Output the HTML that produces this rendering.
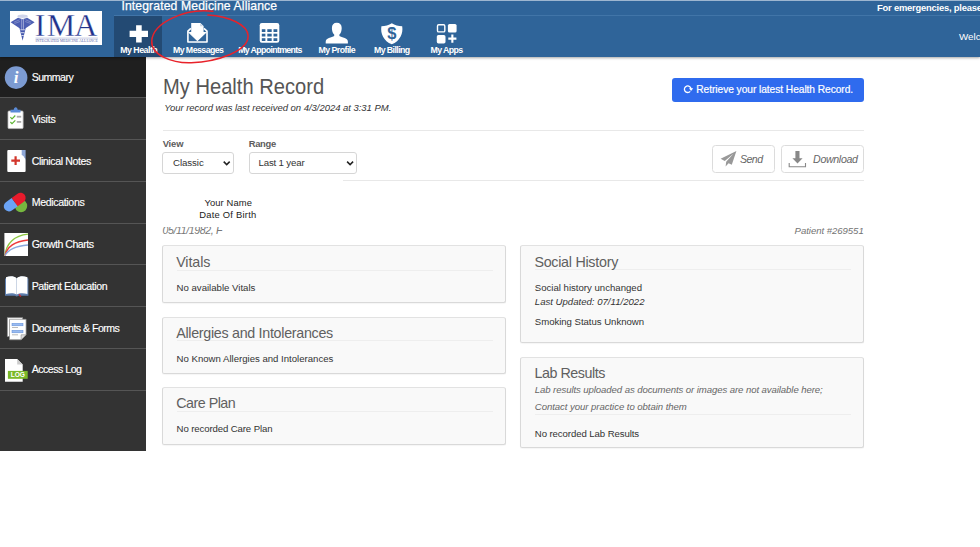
<!DOCTYPE html>
<html><head><meta charset="utf-8">
<style>
*{box-sizing:border-box;margin:0;padding:0}
html,body{width:980px;height:547px;overflow:hidden;background:#fff;font-family:"Liberation Sans",sans-serif;}
.abs{position:absolute}
.t{position:absolute;white-space:nowrap;z-index:1}
.i{font-style:italic}.b{font-weight:bold}
#hdr{position:absolute;left:0;top:0;width:980px;height:56.5px;background:#2f6499;box-shadow:0 1px 2.5px rgba(0,0,0,.35)}
#hdr .topline{position:absolute;left:0;top:0;width:980px;height:1px;background:#9db6d0}
#hdr .sep{position:absolute;left:114px;top:15.2px;width:866px;height:1px;background:#4175a8}
#logo{position:absolute;left:9.8px;top:10.8px;width:92.1px;height:34px;background:#fff;overflow:hidden}
#logo .ima{position:absolute;left:25px;top:-3.4px;font-family:"Liberation Serif",serif;font-size:32px;line-height:36px;color:#22328c;white-space:nowrap;letter-spacing:1.2px;-webkit-text-stroke:0.3px #fff}
.tab{position:absolute;top:16px;height:40.5px;}
.tab.active{background:#234a73}
#side{position:absolute;left:0;top:56.5px;width:146px;height:394.5px;background:#333}
.si{position:absolute;left:0;width:146px;height:41.75px;border-bottom:1px solid #555;}
.si.act{background:#1f1f1f}
.hr{position:absolute;height:1px;background:#e8e8e8}
.sel{position:absolute;border:1px solid #d6d6d6;border-radius:3px;background:#fff}
.card{position:absolute;background:#f9f9f9;border:1px solid #d9d9d9;border-top-color:#e2e2e2;border-radius:2.5px;box-shadow:0 1px 1px rgba(0,0,0,.04)}
.btn{position:absolute;border:1px solid #dcdcdc;border-radius:3.5px;background:#fff}
</style></head><body>
<div id="main" class="abs" style="left:0;top:0;width:980px;height:547px">
<div class="t" id="h1" style="left:163.1px;top:73.5px;font-size:22px;line-height:26px;color:#555;transform-origin:0 0;transform:scaleX(0.915)">My Health Record</div>
<div class="t i" id="sub" style="left:164.2px;top:101.51px;font-size:9.5px;line-height:12px;color:#333;letter-spacing:-0.03px;">Your record was last received on 4/3/2024 at 3:31 PM.</div>
<div class="abs" style="left:672.3px;top:77.5px;width:191.5px;height:24.4px;background:#2f6bee;border-radius:3px"></div>
<div class="t " id="retr" style="left:696.3px;top:83.97px;font-size:10.2px;line-height:12px;color:#fff;letter-spacing:-0.05px;-webkit-text-stroke:0.2px #fff;">Retrieve your latest Health Record.</div>
<div class="hr" style="left:163px;top:130.1px;width:701px;background:#e8e8e8"></div>
<div class="t b" id="view" style="left:162.7px;top:137.84px;font-size:9.4px;line-height:12px;color:#5c5c5c;letter-spacing:-0.15px;">View</div>
<div class="t b" id="range" style="left:248.8px;top:137.84px;font-size:9.4px;line-height:12px;color:#5c5c5c;letter-spacing:-0.33px;">Range</div>
<div class="sel" style="left:162.2px;top:152px;width:71.5px;height:21.7px"></div>
<div class="sel" style="left:248.6px;top:152px;width:108.3px;height:21.7px"></div>
<div class="t " id="classic" style="left:173.0px;top:156.84px;font-size:9.7px;line-height:12px;color:#333;letter-spacing:-0.08px;">Classic</div>
<div class="t " id="last" style="left:258.5px;top:156.84px;font-size:9.7px;line-height:12px;color:#333;letter-spacing:-0.18px;">Last 1 year</div>
<div class="btn" style="left:712.3px;top:144.9px;width:62.5px;height:27.8px"></div>
<div class="btn" style="left:781.3px;top:144.9px;width:82.7px;height:27.8px"></div>
<div class="t i" id="send" style="left:739.9px;top:152.73px;font-size:10.6px;line-height:12px;color:#666;letter-spacing:-0.5px;">Send</div>
<div class="t i" id="down" style="left:813.1px;top:152.73px;font-size:10.6px;line-height:12px;color:#666;letter-spacing:-0.33px;">Download</div>
<div class="hr" style="left:343px;top:180.4px;width:521px;background:#e8e8e8"></div>
<div class="t " id="yn" style="left:204.4px;top:197.04px;font-size:9.4px;line-height:12px;color:#222;letter-spacing:0.12px;">Your Name</div>
<div class="t " id="dob" style="left:199.2px;top:208.94px;font-size:9.4px;line-height:12px;color:#222;letter-spacing:0.24px;">Date Of Birth</div>
<div class="t i" id="bd" style="left:162.6px;top:224.33px;font-size:10.6px;line-height:12px;color:#777;letter-spacing:-0.4px;">05/11/1982, F</div>
<div class="abs" style="left:160px;top:218px;width:80px;height:8.9px;background:#fff;z-index:2"></div>
<div class="t i" id="pat" style="left:0px;top:224.57px;font-size:9.6px;line-height:12px;color:#737373;letter-spacing:-0.05px;left:auto;right:116.3px;">Patient #269551</div>
<div class="card" style="left:162.0px;top:245.3px;width:344.2px;height:58.10px"></div>
<div class="card" style="left:162.0px;top:316.9px;width:344.2px;height:56.80px"></div>
<div class="card" style="left:162.0px;top:387.1px;width:344.2px;height:57.55px"></div>
<div class="card" style="left:520.0px;top:245.3px;width:344.05px;height:98.20px"></div>
<div class="card" style="left:520.0px;top:357.15px;width:344.05px;height:91.35px"></div>
<div class="t " id="c1t" style="left:176.2px;top:252.65px;font-size:14.3px;line-height:18px;color:#606060;letter-spacing:-0.1px;">Vitals</div>
<div class="hr" style="left:176.6px;top:269.9px;width:316px;background:#eeeeee"></div>
<div class="t " id="c1b" style="left:176.6px;top:282.17px;font-size:9.6px;line-height:12px;color:#333;">No available Vitals</div>
<div class="t " id="c2t" style="left:176.2px;top:323.55px;font-size:14.3px;line-height:18px;color:#606060;letter-spacing:-0.3px;">Allergies and Intolerances</div>
<div class="hr" style="left:176.6px;top:340.3px;width:316px;background:#eeeeee"></div>
<div class="t " id="c2b" style="left:176.6px;top:352.77px;font-size:9.6px;line-height:12px;color:#333;">No Known Allergies and Intolerances</div>
<div class="t " id="c3t" style="left:176.2px;top:393.75px;font-size:14.3px;line-height:18px;color:#606060;letter-spacing:-0.5px;">Care Plan</div>
<div class="hr" style="left:176.6px;top:411.0px;width:316px;background:#eeeeee"></div>
<div class="t " id="c3b" style="left:176.6px;top:423.47px;font-size:9.6px;line-height:12px;color:#333;letter-spacing:-0.11px;">No recorded Care Plan</div>
<div class="t " id="c4t" style="left:534.4px;top:252.55px;font-size:14.3px;line-height:18px;color:#606060;letter-spacing:-0.27px;">Social History</div>
<div class="hr" style="left:534.8px;top:269.4px;width:316px;background:#eeeeee"></div>
<div class="t " id="c4b1" style="left:534.8px;top:282.17px;font-size:9.6px;line-height:12px;color:#333;">Social history unchanged</div>
<div class="t i" id="c4b2" style="left:534.8px;top:295.67px;font-size:9.6px;line-height:12px;color:#333;">Last Updated: 07/11/2022</div>
<div class="t " id="c4b3" style="left:534.8px;top:316.17px;font-size:9.6px;line-height:12px;color:#333;letter-spacing:-0.03px;">Smoking Status Unknown</div>
<div class="t " id="c5t" style="left:534.4px;top:364.05px;font-size:14.3px;line-height:18px;color:#606060;letter-spacing:-0.45px;">Lab Results</div>
<div class="t i" id="c5b1" style="left:534.8px;top:384.07px;font-size:9.6px;line-height:12px;color:#666;letter-spacing:-0.09px;">Lab results uploaded as documents or images are not available here;</div>
<div class="t i" id="c5b2" style="left:534.8px;top:401.07px;font-size:9.6px;line-height:12px;color:#666;letter-spacing:-0.06px;">Contact your practice to obtain them</div>
<div class="hr" style="left:534.8px;top:414.3px;width:316px;background:#eeeeee"></div>
<div class="t " id="c5b3" style="left:534.8px;top:427.77px;font-size:9.6px;line-height:12px;color:#333;letter-spacing:-0.08px;">No recorded Lab Results</div>
</div>
<div id="side">
<div class="si act" style="top:0.0px"></div>
<div class="si" style="top:41.75px"></div>
<div class="si" style="top:83.5px"></div>
<div class="si" style="top:125.25px"></div>
<div class="si" style="top:167.0px"></div>
<div class="si" style="top:208.75px"></div>
<div class="si" style="top:250.5px"></div>
<div class="si" style="top:292.25px"></div>
</div>
<div class="t " id="s1" style="left:31.7px;top:70.03px;font-size:10.6px;line-height:14px;color:#fff;letter-spacing:-0.55px;-webkit-text-stroke:0.15px #fff;">Summary</div>
<div class="t " id="s2" style="left:31.7px;top:111.78px;font-size:10.6px;line-height:14px;color:#fff;letter-spacing:-0.2px;-webkit-text-stroke:0.15px #fff;">Visits</div>
<div class="t " id="s3" style="left:31.7px;top:153.53px;font-size:10.6px;line-height:14px;color:#fff;letter-spacing:-0.4px;-webkit-text-stroke:0.15px #fff;">Clinical Notes</div>
<div class="t " id="s4" style="left:31.7px;top:195.28px;font-size:10.6px;line-height:14px;color:#fff;letter-spacing:-0.35px;-webkit-text-stroke:0.15px #fff;">Medications</div>
<div class="t " id="s5" style="left:31.7px;top:237.03px;font-size:10.6px;line-height:14px;color:#fff;letter-spacing:-0.5px;-webkit-text-stroke:0.15px #fff;">Growth Charts</div>
<div class="t " id="s6" style="left:31.7px;top:278.78px;font-size:10.6px;line-height:14px;color:#fff;letter-spacing:-0.45px;-webkit-text-stroke:0.15px #fff;">Patient Education</div>
<div class="t " id="s7" style="left:31.7px;top:320.53px;font-size:10.6px;line-height:14px;color:#fff;letter-spacing:-0.52px;-webkit-text-stroke:0.15px #fff;">Documents &amp; Forms</div>
<div class="t " id="s8" style="left:31.7px;top:362.28px;font-size:10.6px;line-height:14px;color:#fff;letter-spacing:-0.5px;-webkit-text-stroke:0.15px #fff;">Access Log</div>
<div id="hdr">
<div class="topline"></div><div class="sep"></div>
<div id="logo"><div class="ima">IM<span style="margin-left:-2.1px">A</span></div></div>
<div class="tab active" style="left:114px;width:48px"></div>
<div class="t " id="title" style="left:121.4px;top:-2.03px;font-size:12.2px;line-height:16px;color:#fff;letter-spacing:0.12px;-webkit-text-stroke:0.25px #fff;">Integrated Medicine Alliance</div>
<div class="t b" id="emer" style="left:877px;top:0.74px;font-size:9.4px;line-height:14px;color:#fff;letter-spacing:-0.2px;">For emergencies, please</div>
<div class="t " id="welc" style="left:959px;top:29.80px;font-size:9.8px;line-height:14px;color:#fff;">Welc</div>
<div class="t b" id="l1" style="left:120.2px;top:45.15px;font-size:8.8px;line-height:10px;color:#fff;letter-spacing:-0.5px;">My Health</div>
<div class="t b" id="l2" style="left:172.9px;top:45.15px;font-size:8.8px;line-height:10px;color:#fff;letter-spacing:-0.56px;">My Messages</div>
<div class="t b" id="l3" style="left:238.2px;top:45.15px;font-size:8.8px;line-height:10px;color:#fff;letter-spacing:-0.66px;">My Appointments</div>
<div class="t b" id="l4" style="left:318.4px;top:45.15px;font-size:8.8px;line-height:10px;color:#fff;letter-spacing:-0.53px;">My Profile</div>
<div class="t b" id="l5" style="left:373.9px;top:45.15px;font-size:8.8px;line-height:10px;color:#fff;letter-spacing:-0.58px;">My Billing</div>
<div class="t b" id="l6" style="left:430.6px;top:45.15px;font-size:8.8px;line-height:10px;color:#fff;letter-spacing:-0.61px;">My Apps</div>
</div>
<svg id="ov" class="abs" style="left:0;top:0;z-index:3" width="980" height="547" viewBox="0 0 980 547">

<!-- nav icons -->
<g fill="#fff">
<path d="M136.1,25.2h5.6v5.6h6.3v6.1h-6.3v5.7h-5.6v-5.7h-6.5v-6.1h6.5z"/>
<!-- messages -->
<path d="M191.2,23h9.2l3.2,3.1v6h2.7l-8.9,8.1l-8.7,-8.1h2.5z"/>
<path d="M190.9,28.300L187.9,31.200V42H207V31.200L203.9,28.300" fill="none" stroke="#fff" stroke-width="1.600" stroke-linejoin="round"/>
<path d="M188.2,31.6l9.2,8.9l9.3,-8.9" fill="none" stroke="#fff" stroke-width="1.1"/>
<path d="M200.2,23.2v3.1h3.2z" fill="#c9d6e4"/>
<!-- calendar -->
<rect x="259.7" y="23" width="19.6" height="19.7" rx="2.2"/>
<!-- profile -->
<path d="M336.800,22.700c3.200,0,4.900,2,4.900,5.200c0,2.800,-0.900,5.300,-2.300,6.700v1.500c1.200,0.800,3.200,1.200,5.300,1.900c2.100,0.700,3.200,2,3.200,3.800v1.600h-22.200v-1.600c0,-1.800,1.100,-3.100,3.200,-3.800c2.100,-0.700,4.100,-1.100,5.300,-1.900v-1.500c-1.400,-1.400,-2.300,-3.900,-2.300,-6.700c0,-3.200,1.700,-5.200,4.900,-5.200z"/>
<!-- shield -->
<path d="M391.8,23.3C389,25.300 385,26.300 381.400,26.300C380.200,33.500 383.600,41.200 391.8,44.300C400,41.200 403.400,33.500 402.200,26.300C398.600,26.300 394.600,25.300 391.8,23.300Z"/>
<!-- apps -->
<rect x="447.9" y="24" width="8.7" height="8.6" rx="1.6"/>
<rect x="436.8" y="35.1" width="8.7" height="8.3" rx="1.6"/>
<rect x="437.5" y="24.7" width="7.3" height="7.2" rx="1.2" fill="none" stroke="#fff" stroke-width="1.4"/>
<path d="M451.3,34.6h2.1v3h3v2.1h-3v3h-2.1v-3h-3v-2.1h3z"/>
</g>
<g fill="#2f6499">
<rect x="261.8" y="29.2" width="3.6" height="2.8"/><rect x="267.3" y="29.2" width="4.4" height="2.8"/><rect x="273.5" y="29.2" width="3.8" height="2.8"/>
<rect x="261.8" y="33.7" width="3.6" height="2.8"/><rect x="267.3" y="33.7" width="4.4" height="2.8"/><rect x="273.5" y="33.7" width="3.8" height="2.8"/>
<rect x="261.8" y="38.2" width="3.6" height="2.8"/><rect x="267.3" y="38.2" width="4.4" height="2.8"/><rect x="273.5" y="38.2" width="3.8" height="2.8"/>
</g>
<text x="391.8" y="39.300" font-family="Liberation Sans" font-weight="bold" font-size="16.500" fill="#2f6499" text-anchor="middle">$</text>
<!-- refresh icon -->
<path d="M690.230,91.320A3.300,3.300 0 1 1 691,89" fill="none" stroke="#fff" stroke-width="1.300"/>
<path d="M689,88.300h4.200l-2.100,2.600z" fill="#fff"/>
<!-- send / download icons -->
<path d="M736.4,151L720.6,158.8L724.8,161L733.4,153.8L726.2,161.8L725.6,166.6L728.6,163.2L731.8,164.8Z" fill="#999"/>
<path d="M795.4,151h4.1v7.3h3.1l-5.1,5.3l-5.1,-5.3h3z" fill="#888"/>
<path d="M789.2,162.9v3.9h16.3v-3.9" fill="none" stroke="#888" stroke-width="1.1"/>
<!-- select chevrons -->
<path d="M223.7,161.6l3,3l3,-3" fill="none" stroke="#222" stroke-width="1.5"/>
<path d="M347.1,161.6l3,3l3,-3" fill="none" stroke="#222" stroke-width="1.5"/>
<!-- sidebar icons -->
<circle cx="16.1" cy="77.6" r="11.3" fill="#7c9bd2"/>
<text x="16" y="83.2" font-family="Liberation Serif" font-style="italic" font-weight="bold" font-size="17" fill="#fff" text-anchor="middle">i</text>
<!-- clipboard -->
<rect x="8" y="111" width="15.1" height="17.6" rx="1" fill="#fff" stroke="#bbb" stroke-width=".8"/>
<path d="M10.5,112.4v-2.6h3.2c0.2,-1.6,0.9,-2.6,2,-2.6s1.8,1,2,2.6h2.8v2.6z" fill="#5b8bd6"/>
<path d="M10.4,117.2l1.6,1.7l3.3,-3.4M10.4,122l1.6,1.7l3.3,-3.4" fill="none" stroke="#5cb531" stroke-width="1.1"/>
<rect x="16.8" y="115.8" width="4.4" height="1.8" fill="#aaa"/><rect x="16.8" y="121" width="4.4" height="1.8" fill="#aaa"/>
<!-- clinical notes -->
<path d="M8.3,150.1h13.6l3.7,9.5v11.4a1,1 0 0 1 -1,1h-16.3a1,1 0 0 1 -1,-1v-19.9a1,1 0 0 1 1,-1z" fill="#fff"/>
<path d="M21.700,150.100h3.900v10.200c-0.700,-2.600,-1.900,-4.200,-3.900,-5.200z" fill="#8fa8d8"/>
<path d="M14.5,156.3h2.2v3.3h3.3v2.2h-3.3v3.3h-2.2v-3.3h-3.2v-2.2h3.2z" fill="#d2362b"/>
<!-- pill -->
<circle cx="21" cy="206" r="6.2" fill="#76b83f"/>
<g transform="translate(14.700,202.100) rotate(-36)"><path d="M0,-5.1h-7.2a5.1,5.1 0 0 0 0,10.2h7.2z" fill="#6ba4f6"/><path d="M0,-5.1h7.2a5.1,5.1 0 0 1 0,10.2h-7.2z" fill="#e81b2c"/></g>
<!-- growth chart -->
<rect x="4.4" y="233" width="23.6" height="23" fill="#fff"/>
<path d="M5,255.5C6,244,14,235.5,28,234.2" fill="none" stroke="#8dc63f" stroke-width="1.300"/>
<path d="M5,255.5C7,247,14,241.5,28,240" fill="none" stroke="#ee3b3b" stroke-width="1.300"/>
<path d="M5,255.5C8,250,15,246,28,245" fill="none" stroke="#8aa9dd" stroke-width="1.300"/>
<!-- book -->
<path d="M5,278.5v17.3h10.2c0.8,0.8,2.2,0.8,3,0h10.2v-17.3h-1v-1c-4,-1.4,-8,-1.2,-10.7,0.9c-2.7,-2.1,-6.7,-2.3,-10.700,-0.900v1z" fill="#5f7fae"/>
<path d="M6,277.3c3.800,-1.500,8,-1.300,10.600,0.900v16.200c-2.600,-1.400,-6.800,-1.600,-10.600,-0.300z" fill="#fff"/>
<path d="M27.400,277.300c-3.800,-1.500,-8,-1.300,-10.600,0.900v16.200c2.600,-1.400,6.800,-1.600,10.600,-0.300z" fill="#fff"/>
<path d="M18.400,294.600l1.600,-0.400l1.300,2.600l-1.300,0z" fill="#d8232a"/>
<!-- documents -->
<rect x="7.300" y="317.700" width="15.400" height="18.700" fill="#fff" stroke="#888" stroke-width=".7"/>
<path d="M9.500,319.300h16.600v15.500l-5,5h-11.600z" fill="#fff" stroke="#888" stroke-width=".7"/>
<path d="M21.100,339.800v-5h5z" fill="#ddd" stroke="#888" stroke-width=".6"/>
<rect x="12" y="323.300" width="11" height="2.500" fill="#9bbcf0" stroke="#5d8bd8" stroke-width=".5"/>
<rect x="12" y="330.300" width="11" height="2.500" fill="#9bbcf0" stroke="#5d8bd8" stroke-width=".5"/>
<rect x="12" y="327" width="6" height="1" fill="#bbb"/><rect x="12" y="334.300" width="6" height="1" fill="#bbb"/>
<!-- log -->
<path d="M5,359h12.200l5.500,5.500v17.200h-17.700z" fill="#fff"/>
<path d="M17.200,359v5.500h5.500z" fill="#ccc"/>
<rect x="7.900" y="370.900" width="19.800" height="7.900" fill="#7ab929"/>
<text x="17.800" y="377.400" font-family="Liberation Sans" font-weight="bold" font-size="6.600" fill="#fff" text-anchor="middle">LOG</text>
<!-- logo caduceus -->
<ellipse cx="22.6" cy="16.3" rx="5.2" ry="1.7" fill="#cfd4ea"/>
<path d="M10.600,22.200L18,17.700L22.600,19.200L27.200,17.700L34.600,22.200L26,27.900L19.200,27.900Z" fill="#4c5eb2"/>
<path d="M19.300,27.600L25.900,27.600L22.600,40.700Z" fill="#4558ae"/>
<path d="M21.700,17.500v12M23.500,17.500v12" stroke="#dfe3f3" stroke-width=".5" fill="none"/>
<path d="M14,22.200L19.500,19.800M14.500,23.500L20,21.500M31.200,22.200L25.700,19.800M30.700,23.500L25.200,21.500" stroke="#aab3dc" stroke-width=".5" fill="none"/>
<path d="M20.300,29.800h4.600M20.800,32.700h3.600M21.400,35.500h2.400" stroke="#dfe3f3" stroke-width=".9" fill="none"/>
<path d="M35.500,38.100h62.500" stroke="#6f7ab5" stroke-width=".4"/>
<text x="35.600" y="41.500" font-family="Liberation Serif" font-size="3.700" fill="#4d5aa3" textLength="62.300" lengthAdjust="spacingAndGlyphs">INTEGRATED MEDICINE ALLIANCE</text>
<g transform="translate(140,0) scale(0.12793)"><path d="M570,88 C350,62 100,180 92,320 C85,430 250,495 400,490 C600,485 850,400 845,280 C840,190 700,130 530,118" fill="none" stroke="#e8222a" stroke-width="11.5" stroke-linecap="round"/></g>
</svg>
</body></html>
